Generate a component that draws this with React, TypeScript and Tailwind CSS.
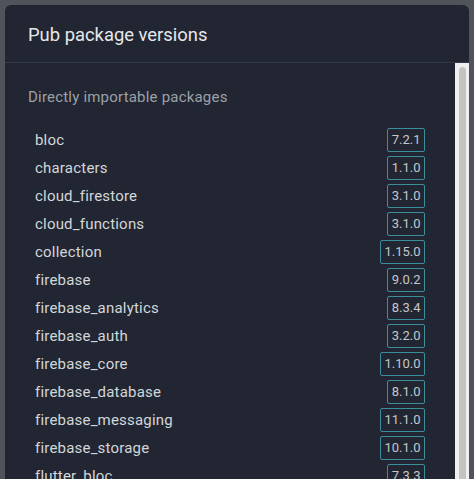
import React from "react";

const pkgs: [string, string][] = [
  ["bloc", "7.2.1"],
  ["characters", "1.1.0"],
  ["cloud_firestore", "3.1.0"],
  ["cloud_functions", "3.1.0"],
  ["collection", "1.15.0"],
  ["firebase", "9.0.2"],
  ["firebase_analytics", "8.3.4"],
  ["firebase_auth", "3.2.0"],
  ["firebase_core", "1.10.0"],
  ["firebase_database", "8.1.0"],
  ["firebase_messaging", "11.1.0"],
  ["firebase_storage", "10.1.0"],
  ["flutter_bloc", "7.3.3"],
  ["flutter_lints", "1.0.4"],
];

export default function App() {
  return (
    <div
      className="h-[479px] w-[474px] overflow-hidden bg-[#50545a] pl-[5px] pt-[5px]"
      style={{ fontFamily: "Roboto, 'Noto Sans', sans-serif" }}
    >
      <div className="flex h-[520px] w-[464px] flex-col rounded-t-[6px] bg-[#212632]">
        <div className="flex h-[58px] shrink-0 items-center border-b border-[#353b46] pl-[23px] pt-[3px]">
          <span className="text-[18.4px] leading-none tracking-[0px] text-[#e6e8eb]">
            Pub package versions
          </span>
        </div>
        <div className="flex min-h-0 flex-1">
          <div className="flex-1 pl-[23px] pr-[30px] pt-[24px]">
            <div className="text-[15px] leading-[20px] tracking-[0.2px] text-[#9ca1a8]">
              Directly importable packages
            </div>
            <div className="mt-[19px] flex flex-col">
              {pkgs.map(([name, ver]) => (
                <div key={name} className="flex h-[28px] items-center justify-between pl-[7px]">
                  <span className="text-[15px] tracking-[0.2px] text-[#d3d6da]">{name}</span>
                  <span className="flex h-[24px] items-center rounded-[2px] border border-[#3d8e9c] px-[3.5px] text-[13px] tracking-normal text-[#c4c7cb]">
                    {ver}
                  </span>
                </div>
              ))}
            </div>
          </div>
          <div className="w-[14px] shrink-0 bg-[#efefef] pl-[4px] pt-[4px]">
            <div className="h-[500px] w-[7px] rounded-full bg-[#c3c3c0]" />
          </div>
        </div>
      </div>
    </div>
  );
}
